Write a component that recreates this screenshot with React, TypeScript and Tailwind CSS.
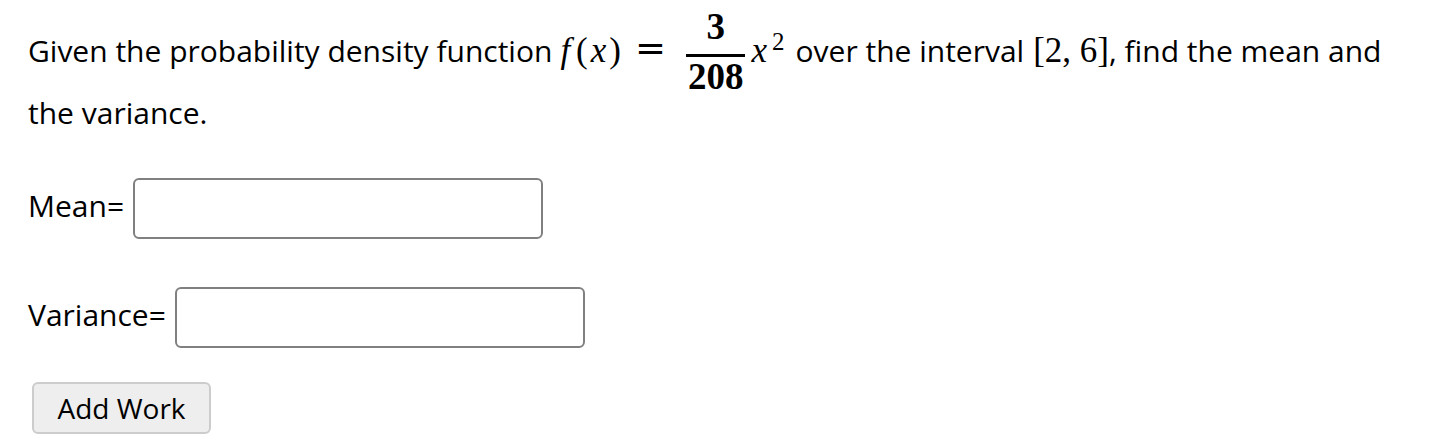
import React from 'react';

const sans = { fontFamily: '"Open Sans", "Liberation Sans", sans-serif' };

function Frac({ num, den }: { num: string; den: string }) {
  return (
    <span className="ml-[20px] mt-[8px] inline-flex flex-col items-center font-['Liberation_Serif',serif] text-[37px] font-bold leading-none">
      <span className="px-[2px] pb-[9px]">{num}</span>
      <span className="w-full border-t-[3px] border-black" />
      <span className="px-[2px] pt-[1px]">{den}</span>
    </span>
  );
}

function Field({ label }: { label: string }) {
  return (
    <div className="flex items-center">
      <span className="mb-[6px] text-[30px] leading-[40px]">{label}</span>
      <input
        type="text"
        className="ml-[9px] h-[61px] w-[410px] rounded-[6px] border-2 border-[#808080] bg-white outline-none"
      />
    </div>
  );
}

export default function App() {
  return (
    <div className="h-[438px] w-[1438px] overflow-hidden bg-white px-[28px] text-black" style={sans}>
      <div className="flex items-start text-[30px] leading-[40px]">
        <span className="mt-[31px]">Given the probability density function</span>
        <span className="ml-[8px] mt-[31px] font-['Liberation_Serif',serif] text-[35px] tracking-[3px]">
          <i className="mr-[3px]">f</i>(<i>x</i>)
        </span>
        <span className="ml-[11px] mt-[29px] font-['DejaVu_Serif',serif] text-[37px] leading-[40px]">=</span>
        <Frac num="3" den="208" />
        <span className="ml-[6px] mt-[31px] font-['Liberation_Serif',serif] text-[35px]">
          <i>x</i>
          <sup className="ml-[5px] text-[25px]">2</sup>
        </span>
        <span className="ml-[11px] mt-[31px]">over the interval</span>
        <span className="ml-[9px] mt-[31px] font-['Liberation_Serif',serif] text-[35px]">[2, 6]</span>
        <span className="mt-[31px]">, find the mean and</span>
      </div>
      <p className="-mt-[2px] text-[30px] leading-[40px]">the variance.</p>

      <div className="mt-[45px] flex flex-col gap-[48px]">
        <Field label="Mean=" />
        <Field label="Variance=" />
      </div>

      <button className="ml-[4px] mt-[34px] h-[52px] w-[179px] rounded-[6px] border-2 border-[#cccccc] bg-[#eeeeee] text-[28px]">
        Add Work
      </button>
    </div>
  );
}
